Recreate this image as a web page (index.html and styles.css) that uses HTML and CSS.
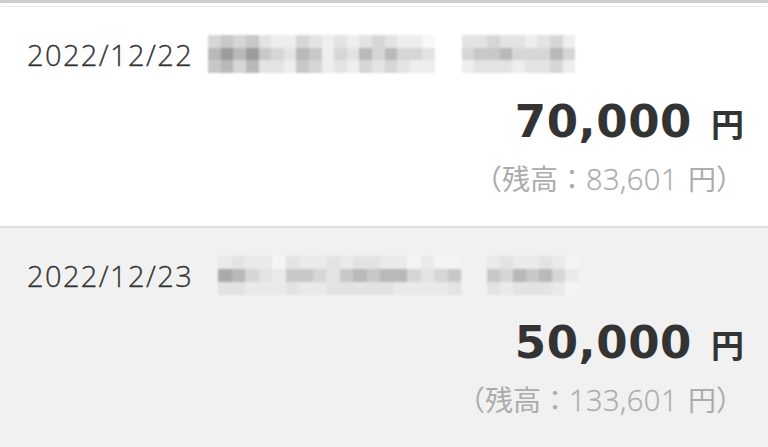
FILE: index.html
```html
<!DOCTYPE html>
<html lang="ja">
<head>
<meta charset="utf-8">
<link rel="stylesheet" href="styles.css">
</head>
<body>
<div class="topbar"></div>
<div class="list">
  <div class="item">
    <div class="head">
      <span class="date">2022/12/22</span>
      <div class="mosaic">
        <div class="grp g18">
          <i class="c3"></i><i class="c4"></i><i class="c3"></i><i class="c4"></i><i class="c2"></i><i class="c1"></i><i class="c1"></i><i class="c3"></i><i class="c2"></i><i class="c1"></i><i class="c2"></i><i class="c1"></i><i class="c2"></i><i class="c3"></i><i class="c2"></i><i class="c1"></i><i class="c1"></i><i class="c0"></i>
          <i class="c5"></i><i class="c7"></i><i class="c5"></i><i class="c7"></i><i class="c4"></i><i class="c3"></i><i class="c2"></i><i class="c5"></i><i class="c4"></i><i class="c1"></i><i class="c3"></i><i class="c2"></i><i class="c5"></i><i class="c3"></i><i class="c5"></i><i class="c3"></i><i class="c3"></i><i class="c2"></i>
          <i class="c4"></i><i class="c5"></i><i class="c3"></i><i class="c5"></i><i class="c2"></i><i class="c2"></i><i class="c1"></i><i class="c4"></i><i class="c3"></i><i class="c1"></i><i class="c2"></i><i class="c1"></i><i class="c3"></i><i class="c2"></i><i class="c3"></i><i class="c2"></i><i class="c1"></i><i class="c1"></i>
        </div>
        <div class="grp g9">
          <i class="c2"></i><i class="c2"></i><i class="c3"></i><i class="c2"></i><i class="c2"></i><i class="c1"></i><i class="c2"></i><i class="c3"></i><i class="c1"></i>
          <i class="c3"></i><i class="c4"></i><i class="c4"></i><i class="c5"></i><i class="c3"></i><i class="c3"></i><i class="c3"></i><i class="c5"></i><i class="c3"></i>
          <i class="c1"></i><i class="c2"></i><i class="c2"></i><i class="c2"></i><i class="c1"></i><i class="c2"></i><i class="c2"></i><i class="c3"></i><i class="c1"></i>
        </div>
      </div>
    </div>
    <div class="amount"><span class="num">70,000</span><span class="yen">円</span></div>
    <div class="balance">（残高：<span class="bnum">83,601</span>円）</div>
  </div>
  <div class="item alt">
    <div class="head">
      <span class="date">2022/12/23</span>
      <div class="mosaic wide">
        <div class="grp g18">
          <i class="c1"></i><i class="c2"></i><i class="c1"></i><i class="c1"></i><i class="c0"></i><i class="c2"></i><i class="c1"></i><i class="c1"></i><i class="c2"></i><i class="c1"></i><i class="c2"></i><i class="c2"></i><i class="c1"></i><i class="c1"></i><i class="c0"></i><i class="c1"></i><i class="c0"></i><i class="c0"></i>
          <i class="c6"></i><i class="c5"></i><i class="c3"></i><i class="c2"></i><i class="c1"></i><i class="c4"></i><i class="c4"></i><i class="c3"></i><i class="c2"></i><i class="c4"></i><i class="c5"></i><i class="c4"></i><i class="c5"></i><i class="c5"></i><i class="c3"></i><i class="c2"></i><i class="c3"></i><i class="c4"></i>
          <i class="c2"></i><i class="c2"></i><i class="c1"></i><i class="c1"></i><i class="c1"></i><i class="c2"></i><i class="c1"></i><i class="c1"></i><i class="c2"></i><i class="c2"></i><i class="c2"></i><i class="c2"></i><i class="c2"></i><i class="c1"></i><i class="c1"></i><i class="c1"></i><i class="c1"></i><i class="c2"></i>
        </div>
        <div class="grp g7">
          <i class="c1"></i><i class="c2"></i><i class="c1"></i><i class="c1"></i><i class="c2"></i><i class="c1"></i><i class="c0"></i>
          <i class="c4"></i><i class="c3"></i><i class="c5"></i><i class="c4"></i><i class="c5"></i><i class="c3"></i><i class="c1"></i>
          <i class="c2"></i><i class="c1"></i><i class="c2"></i><i class="c2"></i><i class="c2"></i><i class="c1"></i><i class="c0"></i>
        </div>
      </div>
    </div>
    <div class="amount"><span class="num">50,000</span><span class="yen">円</span></div>
    <div class="balance">（残高：<span class="bnum">133,601</span>円）</div>
  </div>
</div>
</body>
</html>
```

FILE: styles.css
```css
html, body {
  margin: 0;
  padding: 0;
  background: #ffffff;
}
body {
  font-family: "Open Sans", "Noto Sans CJK JP", sans-serif;
  color: #333333;
  overflow: hidden;
}
.topbar {
  height: 3px;
  background: #cdcdcd;
  border-bottom: 3px solid #ffffff;
  box-shadow: 0 4px 0 -1px #e9e9e9;
  margin-bottom: 1px;
}
.list {
  display: flex;
  flex-direction: column;
}
.item {
  background: #ffffff;
  border-bottom: 2px solid #dedede;
  padding: 24px 24px 27px 27px;
  display: flex;
  flex-direction: column;
}
.item.alt {
  background: #f1f1f1;
}
.head {
  height: 46px;
  display: flex;
  align-items: center;
  gap: 15px;
}
.date {
  font-family: "Open Sans", sans-serif;
  font-weight: 300;
  font-size: 29px;
  letter-spacing: 1.4px;
  color: #333333;
  -webkit-text-stroke: 0.3px #333333;
}
.mosaic {
  display: flex;
  gap: 27px;
  filter: blur(0.8px);
}
.mosaic.wide {
  gap: 26px;
  margin-left: 10px;
}
.grp {
  display: grid;
  grid-auto-rows: 12.5px;
}
.grp.g18 { grid-template-columns: repeat(18, 12.6px); }
.grp.g9 { grid-template-columns: repeat(9, 12.6px); }
.wide .grp.g18 { grid-template-columns: repeat(18, 13.5px); grid-auto-rows: 13px; }
.grp.g7 { grid-template-columns: repeat(7, 13px); grid-auto-rows: 13px; }
.grp i { display: block; }
.c0 { background: #f8f8f8; }
.c1 { background: #eeeeee; }
.c2 { background: #e3e3e3; }
.c3 { background: #d6d6d6; }
.c4 { background: #c8c8c8; }
.c5 { background: #b9b9b9; }
.c6 { background: #a9a9a9; }
.c7 { background: #9c9c9c; }
.alt .c0 { background: #f4f4f4; }
.alt .c1 { background: #eaeaea; }
.amount {
  display: flex;
  justify-content: flex-end;
  align-items: baseline;
  height: 56px;
  line-height: 56px;
  margin-top: 17px;
}
.num {
  font-family: "DejaVu Sans", sans-serif;
  font-weight: bold;
  font-size: 45px;
  letter-spacing: 0.6px;
  color: #333333;
}
.yen {
  font-family: "Noto Sans CJK JP", sans-serif;
  font-weight: bold;
  font-size: 33px;
  margin-left: 19px;
  color: #333333;
}
.balance {
  text-align: right;
  font-family: "Noto Sans CJK JP", sans-serif;
  font-size: 28px;
  line-height: 40px;
  margin-top: 8px;
  color: #acacac;
}
.bnum {
  font-family: "Open Sans", sans-serif;
  font-weight: 300;
  font-size: 29px;
  letter-spacing: 0.5px;
  margin-right: 10px;
  -webkit-text-stroke: 0.3px #acacac;
}
```
